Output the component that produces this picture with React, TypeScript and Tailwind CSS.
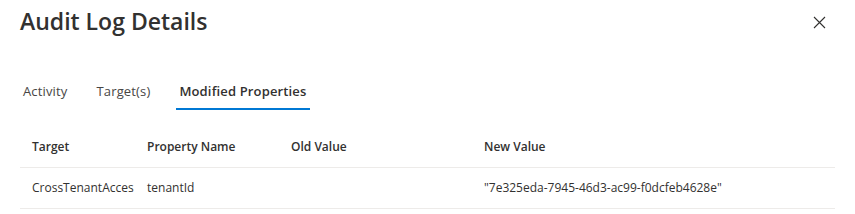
import React, { useState } from "react";

const tabs = ["Activity", "Target(s)", "Modified Properties"];

const rows = [
  {
    target: "CrossTenantAcces",
    property: "tenantId",
    oldValue: "",
    newValue: '"7e325eda-7945-46d3-ac99-f0dcfeb4628e"',
  },
];

export default function App() {
  const [tab, setTab] = useState("Modified Properties");

  return (
    <div
      className="w-[855px] h-[214px] bg-white text-[#323130] overflow-hidden"
      style={{ fontFamily: '"Segoe UI", "Open Sans", sans-serif' }}
    >
      {/* Header */}
      <div className="flex items-start justify-between pl-5 pr-[29px] pt-[4px]">
        <h1 className="text-[23px] font-semibold leading-[34px]">Audit Log Details</h1>
        <button aria-label="Close" className="mt-[12px] text-[#323130]">
          <svg className="size-[13px]" viewBox="0 0 13 13" fill="none" stroke="currentColor" strokeWidth="1.1">
            <path d="M1 1l11 11M12 1L1 12" />
          </svg>
        </button>
      </div>

      {/* Tabs */}
      <div className="flex gap-[23px] pl-[20px] mt-[36px]">
        {tabs.map((t) => (
          <button
            key={t}
            onClick={() => setTab(t)}
            className={`relative px-[3px] h-[35px] text-[13px] tracking-[0.15px] ${
              t === tab ? "font-semibold" : "text-[#484644]"
            }`}
          >
            {t}
            {t === tab && (
              <span className="absolute left-0 right-0 bottom-[-1px] h-[2px] bg-[#0078d4]" />
            )}
          </button>
        ))}
      </div>

      {/* Table */}
      <div className="mx-5 mt-[18px] text-[12px]">
        <div className="grid grid-cols-[115px_144px_193px_1fr] h-[41px] items-center border-b border-[#edebe9] font-semibold">
          <div className="px-3">Target</div>
          <div className="px-3">Property Name</div>
          <div className="px-3">Old Value</div>
          <div className="px-3">New Value</div>
        </div>
        {rows.map((r) => (
          <div
            key={r.property}
            className="grid grid-cols-[115px_144px_193px_1fr] h-[41px] items-center border-b border-[#edebe9]"
          >
            <div className="pl-3 whitespace-nowrap">{r.target}</div>
            <div className="px-3 whitespace-nowrap">{r.property}</div>
            <div className="px-3">{r.oldValue}</div>
            <div className="px-3 whitespace-nowrap">{r.newValue}</div>
          </div>
        ))}
      </div>
    </div>
  );
}
